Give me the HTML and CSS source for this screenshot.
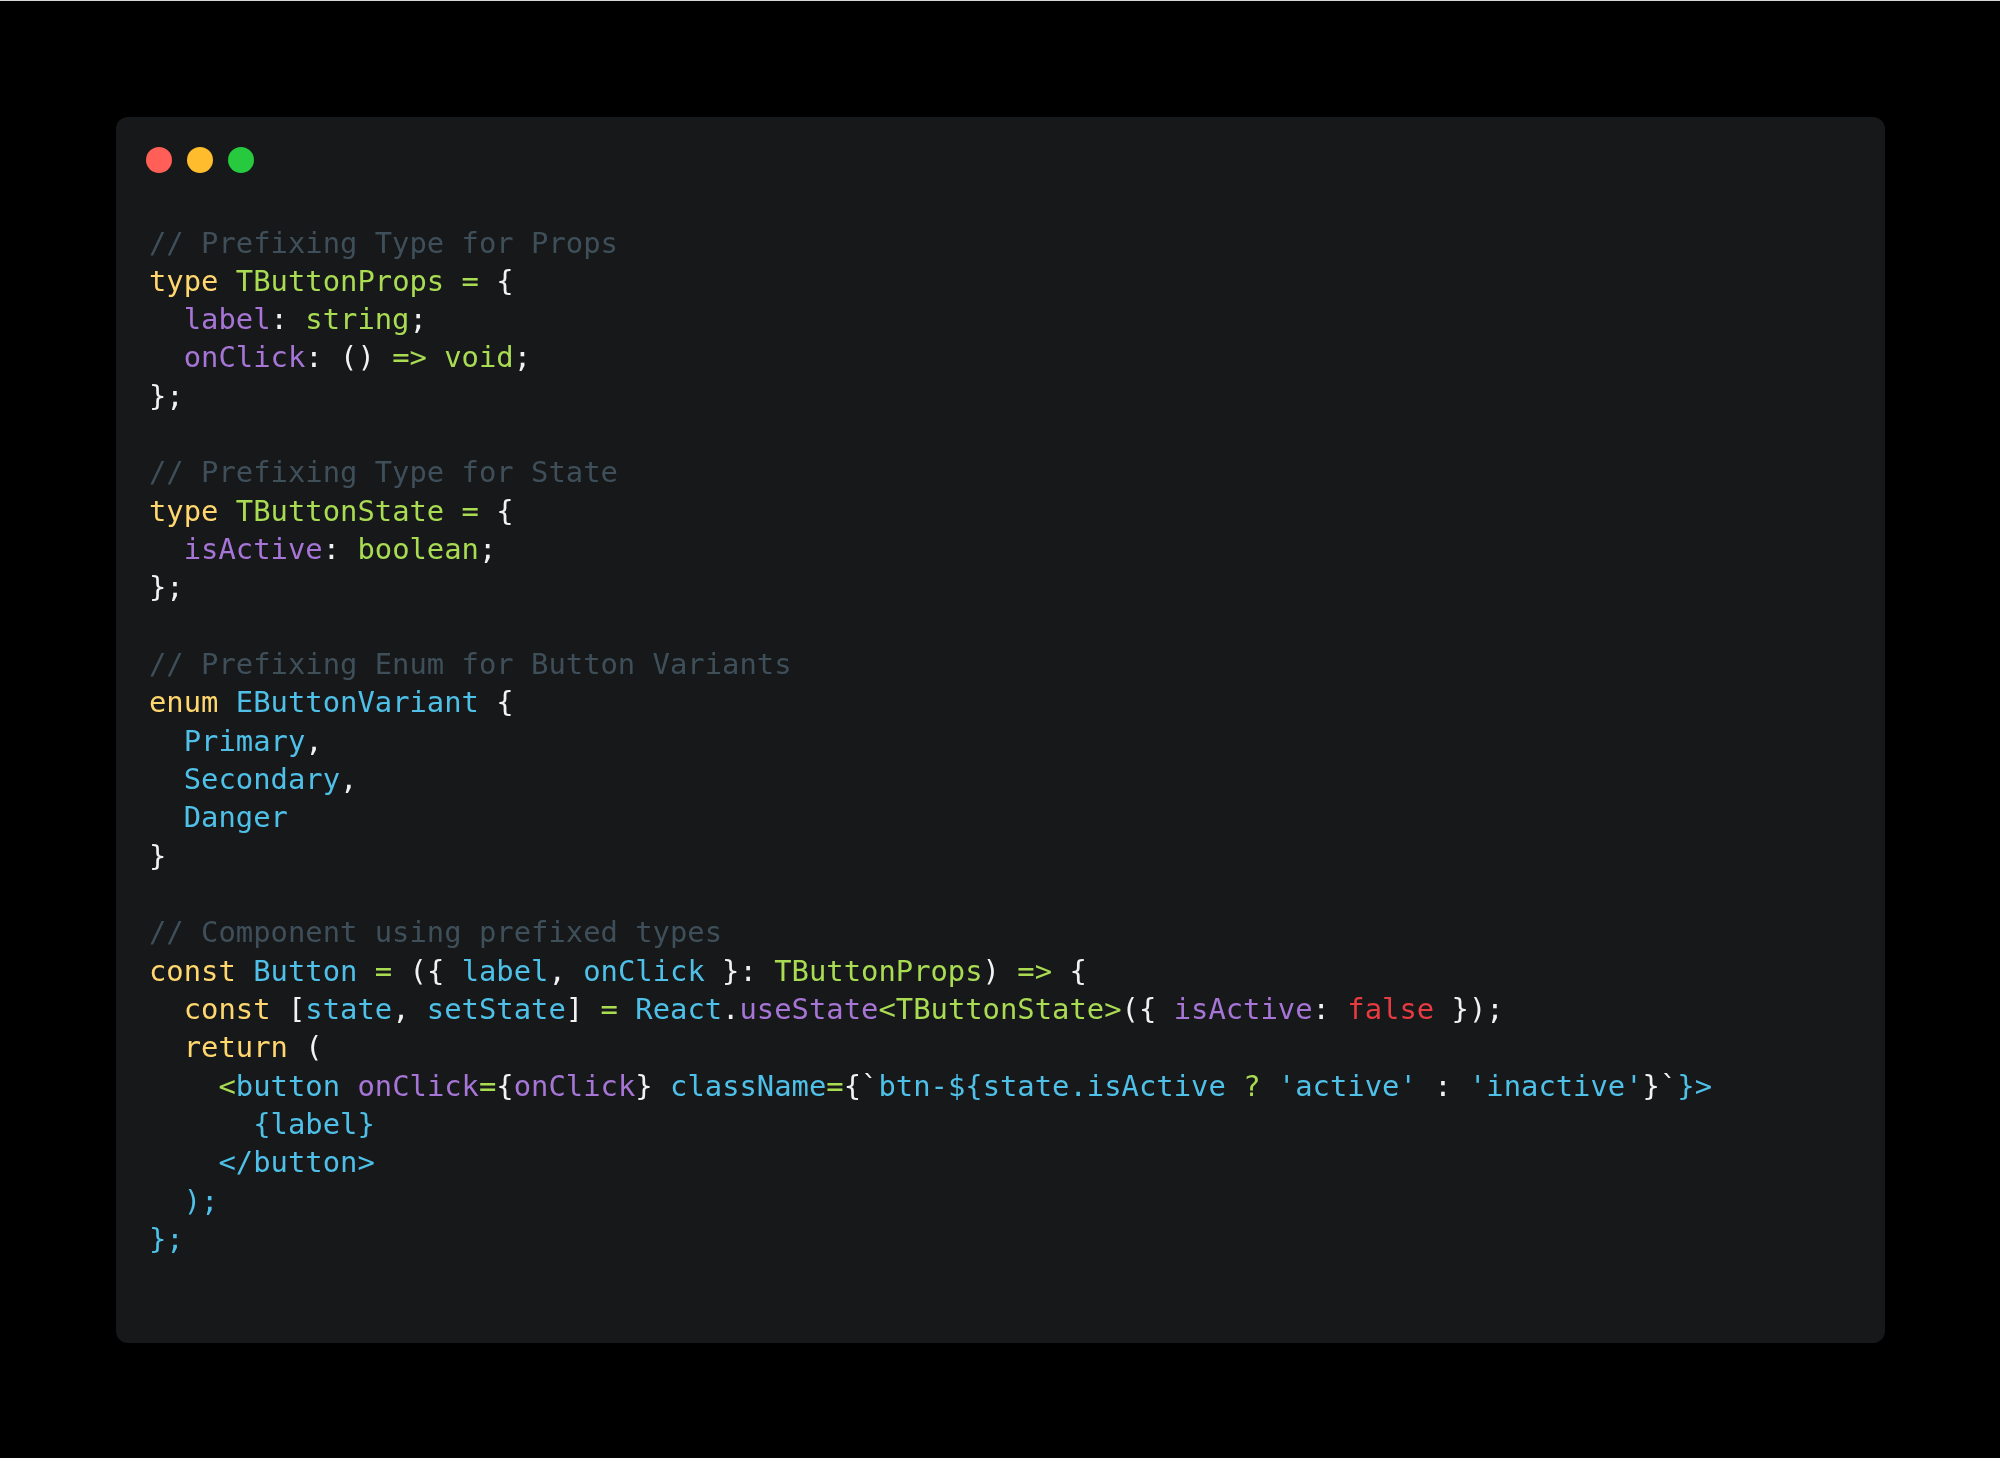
FILE: index.html
```html
<!DOCTYPE html>
<html lang="en">
<head>
<meta charset="utf-8">
<title>Code snippet</title>
<link rel="stylesheet" href="styles.css">
</head>
<body>
<main class="window">
<div class="dots"><span class="dot red"></span><span class="dot amber"></span><span class="dot green"></span></div>
<pre class="code"><span class="c">// Prefixing Type for Props</span>
<span class="k">type</span> <span class="g">TButtonProps</span> <span class="g">=</span> {
  <span class="p">label</span>: <span class="g">string</span>;
  <span class="p">onClick</span>: () <span class="g">=&gt;</span> <span class="g">void</span>;
};

<span class="c">// Prefixing Type for State</span>
<span class="k">type</span> <span class="g">TButtonState</span> <span class="g">=</span> {
  <span class="p">isActive</span>: <span class="g">boolean</span>;
};

<span class="c">// Prefixing Enum for Button Variants</span>
<span class="k">enum</span> <span class="b">EButtonVariant</span> {
  <span class="b">Primary</span>,
  <span class="b">Secondary</span>,
  <span class="b">Danger</span>
}

<span class="c">// Component using prefixed types</span>
<span class="k">const</span> <span class="b">Button</span> <span class="g">=</span> ({ <span class="b">label</span>, <span class="b">onClick</span> }: <span class="g">TButtonProps</span>) <span class="g">=&gt;</span> {
  <span class="k">const</span> [<span class="b">state</span>, <span class="b">setState</span>] <span class="g">=</span> <span class="b">React</span>.<span class="p">useState</span><span class="g">&lt;TButtonState&gt;</span>({ <span class="p">isActive</span>: <span class="r">false</span> });
  <span class="k">return</span> (
    <span class="g">&lt;</span><span class="b">button</span> <span class="p">onClick</span><span class="g">=</span>{<span class="p">onClick</span>} <span class="b">className</span><span class="g">=</span>{`<span class="b">btn-${state.isActive</span> <span class="g">?</span> <span class="b">'active'</span> : <span class="b">'inactive'</span>}`<span class="b">}&gt;</span>
      <span class="b">{label}</span>
    <span class="b">&lt;/button&gt;</span>
  <span class="b">);</span>
<span class="b">};</span></pre>
</main>
</body>
</html>
```
FILE: styles.css
```css
html, body {
  margin: 0;
  background: #000;
}
body {
  min-height: 1458px;
  box-sizing: border-box;
  padding: 116px 115px 0 116px;
  border-top: 1px solid #d8d8d8;
}
.window {
  height: 1226px;
  box-sizing: border-box;
  padding: 30px 30px 0 30px;
  background: #16181a;
  border-radius: 12px;
}
.dots {
  display: flex;
  gap: 15px;
}
.dot {
  width: 26px;
  height: 26px;
  border-radius: 50%;
}
.red { background: #ff5f56; }
.amber { background: #ffbd2e; }
.green { background: #27c93f; }
.code {
  margin: 50.5px 0 0 3px;
  font-family: "DejaVu Sans Mono", monospace;
  font-size: 28.85px;
  line-height: 38.33px;
  color: #f2f2f2;
  filter: blur(0.35px);
}
.c { color: #3f4f59; }
.k { color: #ffd76e; }
.g { color: #a9dc52; }
.p { color: #a675d6; }
.b { color: #4fc1e9; }
.r { color: #e63b41; }
```
